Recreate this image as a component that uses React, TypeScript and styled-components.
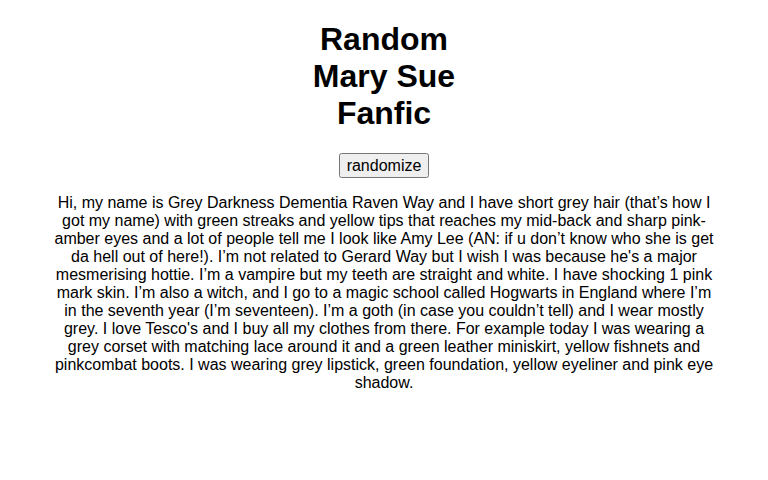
import React, { useState } from "react";
import styled, { createGlobalStyle } from "styled-components";

const GlobalStyle = createGlobalStyle`
  body {
    margin: 0;
    background: #fff;
    color: #000;
    font-family: "Liberation Sans", Arial, sans-serif;
  }
`;

const Page = styled.div`
  display: flex;
  flex-direction: column;
  align-items: center;
  text-align: center;
`;

const Title = styled.h1`
  width: 170px;
  margin: 21px 0 21px;
  font-size: 32px;
  font-weight: bold;
  line-height: 37px;
`;

const RandomButton = styled.button`
  font-family: "Liberation Sans", Arial, sans-serif;
  font-size: 16px;
  line-height: 19px;
  padding: 1px 6px;
`;

const Story = styled.p`
  width: 660px;
  margin: 16px 0;
  font-size: 16px;
  line-height: 18px;
`;

const stories = [
  "Hi, my name is Grey Darkness Dementia Raven Way and I have short grey hair (that’s how I got my name) with green streaks and yellow tips that reaches my mid-back and sharp pink-amber eyes and a lot of people tell me I look like Amy Lee (AN: if u don’t know who she is get da hell out of here!). I’m not related to Gerard Way but I wish I was because he's a major mesmerising hottie. I’m a vampire but my teeth are straight and white. I have shocking 1 pink mark skin. I’m also a witch, and I go to a magic school called Hogwarts in England where I’m in the seventh year (I’m seventeen). I’m a goth (in case you couldn’t tell) and I wear mostly grey. I love Tesco's and I buy all my clothes from there. For example today I was wearing a grey corset with matching lace around it and a green leather miniskirt, yellow fishnets and pinkcombat boots. I was wearing grey lipstick, green foundation, yellow eyeliner and pink eye shadow.",
];

export default function App() {
  const [index, setIndex] = useState(0);

  return (
    <>
      <GlobalStyle />
      <Page>
        <Title>Random Mary Sue Fanfic</Title>
        <RandomButton onClick={() => setIndex((index + 1) % stories.length)}>
          randomize
        </RandomButton>
        <Story>{stories[index]}</Story>
      </Page>
    </>
  );
}
